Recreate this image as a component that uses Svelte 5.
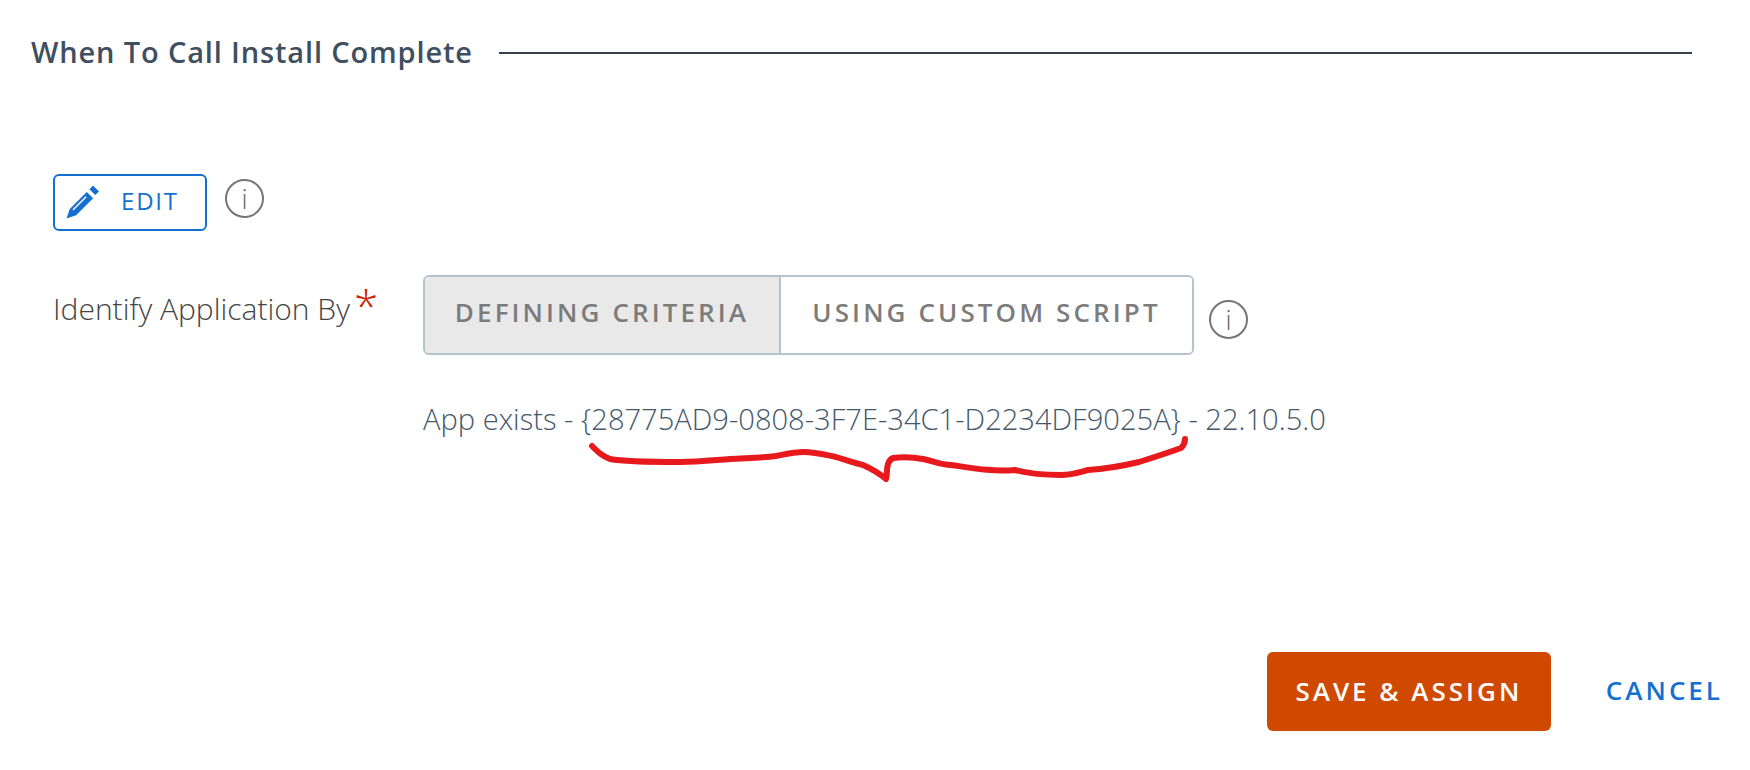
<script>
	const annotation = "M592 446 C598 452 602 456 610 459 C625 462 650 462 680 462 C700 462 715 460 730 459 C745 458 762 458 776 456 C786 454 794 452 804 452 C815 452 826 455 836 457 C846 460 854 463 863 465 C872 469 880 474 886 479 C888 472 885 462 893 458 C902 457 912 457 923 459 C933 461 941 465 951 465 C972 468 992 472 1015 470 C1030 474 1045 475 1061 475 C1072 475 1080 472 1088 470 C1105 469 1122 466 1139 462 C1155 457 1170 452 1181 448 C1184 445 1185 443 1185 439";
</script>

<main class="page">
	<header class="section-title">
		<h2>When To Call Install Complete</h2>
		<span class="rule"></span>
	</header>

	<div class="edit-row">
		<button class="edit">
			<svg class="pencil" viewBox="0 0 32 32" width="34" height="34">
				<path fill="currentColor" d="M0.5 31.5 L3.5 22.5 L19.5 6.5 L25.5 12.5 L9.5 28.5 Z" />
				<path fill="#fff" d="M6 23 L18.5 10.5 L19.5 11.5 L7 24 Z" />
				<path fill="currentColor" d="M22 4 L25.5 0.5 L31 6 L27.5 9.5 Z" />
			</svg>
			<span>EDIT</span>
		</button>
		<span class="info">i</span>
	</div>

	<div class="form-row">
		<div class="label">Identify Application By<span class="star">*</span></div>
		<div class="field">
			<div class="control">
				<div class="segments">
					<button class="segment active">DEFINING CRITERIA</button>
					<button class="segment">USING CUSTOM SCRIPT</button>
				</div>
				<span class="info second">i</span>
			</div>
			<p class="summary">App exists - &#123;28775AD9-0808-3F7E-34C1-D2234DF9025A&#125; - 22.10.5.0</p>
		</div>
	</div>

	<footer class="actions">
		<button class="save">SAVE &amp; ASSIGN</button>
		<button class="cancel">CANCEL</button>
	</footer>

	<svg class="scribble" viewBox="0 0 1750 770" width="1750" height="770">
		<path d={annotation} />
	</svg>
</main>

<style>
	:global(body) {
		background: #fff;
	}

	.page {
		position: relative;
		width: 1750px;
		height: 770px;
		overflow: hidden;
		font-family: "Open Sans", sans-serif;
	}

	.section-title {
		display: flex;
		align-items: center;
		gap: 26px;
		height: 36px;
		padding: 35px 58px 0 31px;
	}

	h2 {
		margin: 0;
		padding-bottom: 2px;
		font-size: 29px;
		font-weight: 600;
		line-height: 36px;
		letter-spacing: 0.85px;
		color: #3f4f5f;
		white-space: nowrap;
	}

	.rule {
		flex: 1;
		height: 2px;
		margin-top: -1px;
		background: #35404c;
	}

	.edit-row {
		display: flex;
		align-items: center;
		gap: 18px;
		margin: 103px 0 0 53px;
	}

	button {
		font-family: inherit;
		cursor: pointer;
	}

	.edit {
		display: flex;
		align-items: center;
		width: 154px;
		height: 57px;
		padding: 0 0 0 11px;
		border: 2px solid #1470d0;
		border-radius: 6px;
		background: #fff;
		color: #1470d0;
		font-size: 24px;
		letter-spacing: 1.8px;
	}

	.edit span {
		margin-left: 21px;
		margin-top: -4px;
	}

	.pencil {
		flex: none;
		margin-top: -2px;
	}

	.info {
		display: flex;
		align-items: center;
		justify-content: center;
		box-sizing: border-box;
		width: 39px;
		height: 39px;
		margin-top: -9px;
		border: 2px solid #757575;
		border-radius: 50%;
		font-size: 27px;
		font-weight: 300;
		color: #666;
	}

	.form-row {
		display: flex;
		margin: 44px 0 0 53px;
	}

	.label {
		width: 370px;
		padding-top: 15px;
		font-size: 30px;
		line-height: 37px;
		font-weight: 300;
		color: #444;
		white-space: nowrap;
	}

	.star {
		margin-left: 4px;
		font-size: 44px;
		line-height: 20px;
		vertical-align: -3px;
		color: #cc2200;
	}

	.control {
		display: flex;
		align-items: flex-start;
		gap: 15px;
	}

	.segments {
		display: flex;
		box-sizing: border-box;
		width: 771px;
		height: 80px;
		border: 2px solid #b3c3d2;
		border-radius: 6px;
		overflow: hidden;
	}

	.segment {
		padding: 0;
		border: 0;
		background: #fff;
		color: #7c7c7c;
		font-size: 26px;
		font-weight: 600;
		letter-spacing: 3.1px;
		flex: 1;
		padding-bottom: 6px;
	}

	.segment.active {
		flex: none;
		width: 356px;
		border-right: 2px solid #b3c3d2;
		background: #e9e9e9;
	}

	.info.second {
		margin-top: 25px;
	}

	.summary {
		margin: 45px 0 0;
		font-size: 29.1px;
		line-height: 38px;
		font-weight: 300;
		color: #44586a;
		white-space: nowrap;
	}

	.actions {
		position: absolute;
		right: 27px;
		bottom: 39px;
		display: flex;
		align-items: center;
		gap: 55px;
	}

	.save {
		width: 284px;
		height: 79px;
		padding-bottom: 3px;
		border: 0;
		border-radius: 6px;
		background: #cf4a00;
		color: #fff;
		font-size: 26px;
		font-weight: 600;
		letter-spacing: 3px;
	}

	.cancel {
		padding: 0 0 3px;
		border: 0;
		background: none;
		color: #1470d0;
		font-size: 26px;
		font-weight: 600;
		letter-spacing: 3px;
	}

	.scribble {
		position: absolute;
		inset: 0;
		pointer-events: none;
	}

	.scribble path {
		fill: none;
		stroke: #e8191c;
		stroke-width: 6;
		stroke-linecap: round;
		stroke-linejoin: round;
	}
</style>
